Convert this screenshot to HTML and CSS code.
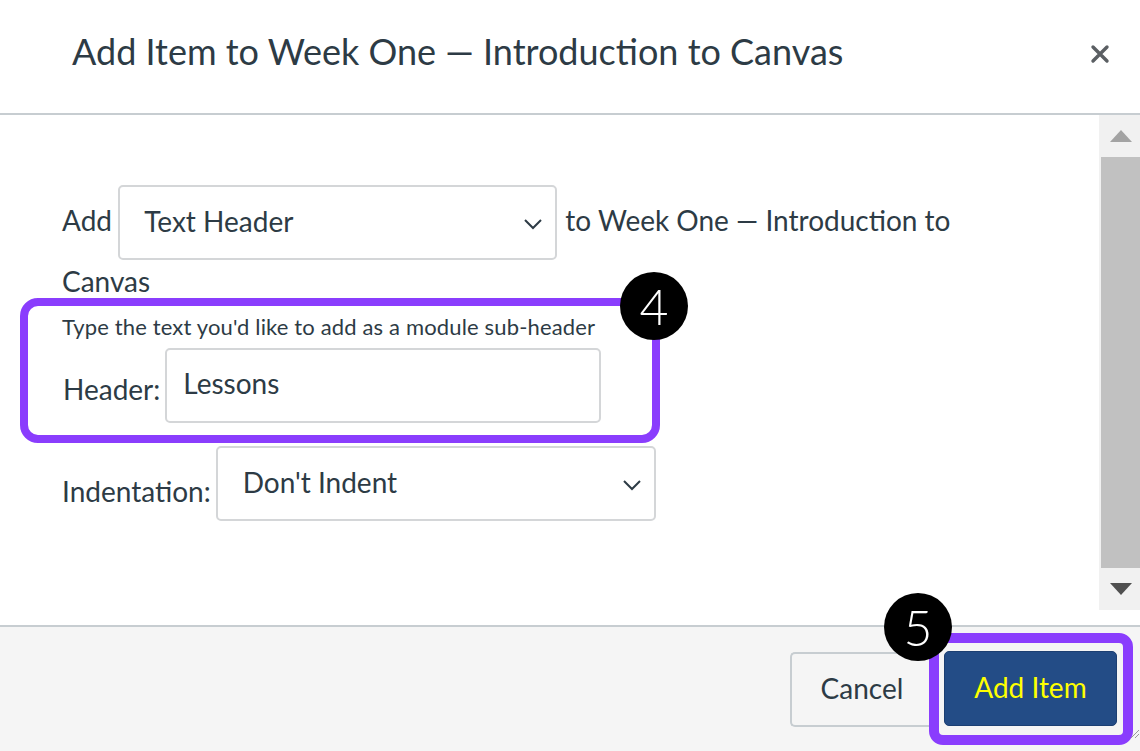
FILE: index.html
```html
<!DOCTYPE html>
<html lang="en">
<head>
    <meta charset="UTF-8">
    <meta name="viewport" content="width=device-width, initial-scale=1.0">
    <title>Add Item</title>
    <link rel="stylesheet" href="styles.css">
</head>
<body>
    <div class="dialog">
        <div class="dialog-header">
            <h1>Add Item to Week One — Introduction to Canvas</h1>
            <button class="close-btn" aria-label="Close">
                <svg width="20" height="20" viewBox="0 0 20 20"><path d="M3 3L17 17M17 3L3 17" stroke="#5b5f63" stroke-width="3.4" stroke-linecap="round"/></svg>
            </button>
        </div>

        <div class="dialog-body">
            <div class="content">
                <p class="add-line">Add <span class="fake-select select-type"><span>Text Header</span><svg class="chevron" width="20" height="12" viewBox="0 0 20 12"><path d="M2 2L10 10L18 2" fill="none" stroke="#2d3b45" stroke-width="2"/></svg></span> to Week One — Introduction to Canvas</p>

                <div class="highlight-box">
                    <span class="badge badge-four">4</span>
                    <p class="hint">Type the text you'd like to add as a module sub-header</p>
                    <div class="field-row">
                        <label for="header">Header:</label>
                        <input type="text" id="header" value="Lessons">
                    </div>
                </div>

                <div class="field-row indent-row">
                    <label>Indentation:</label>
                    <span class="fake-select select-indent"><span>Don't Indent</span><svg class="chevron" width="20" height="12" viewBox="0 0 20 12"><path d="M2 2L10 10L18 2" fill="none" stroke="#2d3b45" stroke-width="2"/></svg></span>
                </div>
            </div>

            <div class="scrollbar">
                <div class="scroll-arrow"><svg width="22" height="12" viewBox="0 0 22 12"><path d="M11 0L22 12H0Z" fill="#a3a3a3"/></svg></div>
                <div class="scroll-thumb"></div>
                <div class="scroll-arrow"><svg width="22" height="12" viewBox="0 0 22 12"><path d="M0 0H22L11 12Z" fill="#505050"/></svg></div>
            </div>
        </div>

        <div class="dialog-footer">
            <button class="btn btn-cancel">Cancel</button>
            <div class="btn-ring">
                <span class="badge badge-five">5</span>
                <button class="btn btn-primary">Add Item</button>
            </div>
            <svg class="resize-grip" width="10" height="10" viewBox="0 0 10 10"><path d="M9 1L1 9M9 5L5 9" stroke="#999" stroke-width="1"/></svg>
        </div>
    </div>
</body>
</html>
```

FILE: styles.css
```css
body {
    margin: 0;
    font-family: Lato, "Open Sans", sans-serif;
    color: #2d3b45;
    background-color: #fff;
    overflow: hidden;
}
.dialog {
    width: 1140px;
    height: 751px;
    display: flex;
    flex-direction: column;
    position: relative;
}
.dialog-header {
    height: 113px;
    flex-shrink: 0;
    display: flex;
    align-items: center;
    justify-content: space-between;
    padding: 0 30px 0 72px;
    border-bottom: 2px solid #c7cdd1;
}
.dialog-header h1 {
    margin: 0 0 12px 0;
    font-size: 36px;
    font-weight: normal;
}
.close-btn {
    background: none;
    border: none;
    padding: 0;
    margin-bottom: 2px;
    cursor: pointer;
}
.dialog-body {
    height: 510px;
    display: flex;
}
.content {
    flex: 1;
    padding: 71px 0 0 62px;
    font-size: 28px;
}
.add-line {
    margin: 0;
    width: 940px;
    line-height: 40px;
}
.fake-select {
    display: inline-flex;
    align-items: center;
    justify-content: space-between;
    box-sizing: border-box;
    height: 75px;
    border: 2px solid #d4d6d8;
    border-radius: 5px;
    background-color: #fff;
    vertical-align: middle;
}
.select-type {
    width: 439px;
    padding: 0 12px 0 24px;
    margin: 0 1px 0 -1px;
    position: relative;
    top: -1px;
}
.select-type span {
    margin-top: -3px;
}
.select-indent span {
    margin-top: -4px;
}
.select-indent {
    width: 440px;
    padding: 0 12px 0 25px;
}
.chevron {
    margin-top: 2px;
}
.highlight-box {
    position: relative;
    width: 640px;
    box-sizing: border-box;
    margin: -3px 0 0 -42px;
    padding: 6px 0 12px 34px;
    border: 8px solid #8a3dfd;
    border-radius: 18px;
}
.hint {
    margin: 0 0 6px 0;
    font-size: 22px;
    letter-spacing: 0.15px;
    line-height: 30px;
}
.field-row {
    display: flex;
    align-items: center;
    gap: 5px;
}
.field-row label {
    padding-top: 6px;
    padding-left: 1px;
}
.field-row input {
    width: 436px;
    height: 75px;
    box-sizing: border-box;
    padding: 0 16px 6px 16px;
    border: 2px solid #d4d6d8;
    border-radius: 5px;
    font-family: inherit;
    font-size: 28px;
    color: #2d3b45;
}
.indent-row {
    margin-top: 3px;
    gap: 5px;
}
.indent-row label {
    padding-left: 0;
    padding-top: 14px;
}
.scrollbar {
    width: 41px;
    height: 495px;
    background-color: #f1f1f1;
    display: flex;
    flex-direction: column;
}
.scroll-arrow {
    height: 42px;
    display: flex;
    align-items: center;
    justify-content: center;
    padding-left: 2px;
}
.scroll-thumb {
    flex: 1;
    margin-left: 2px;
    background-color: #c1c1c1;
}
.dialog-footer {
    flex: 1;
    display: flex;
    justify-content: flex-end;
    align-items: flex-start;
    padding: 6px 7px 0 0;
    border-top: 2px solid #c7cdd1;
    background-color: #f5f5f5;
    position: relative;
}
.btn {
    font-family: inherit;
    font-size: 28px;
    height: 75px;
    border-radius: 5px;
    cursor: pointer;
}
.btn-cancel {
    width: 139px;
    margin-top: 19px;
    border: 2px solid #c7cdd1;
    border-right: none;
    border-radius: 5px 0 0 5px;
    background-color: #f5f5f5;
    color: #2d3b45;
    padding: 0 0 4px 3px;
}
.btn-ring {
    position: relative;
    padding: 8px 6px 9px 5px;
    border: 10px solid #8a3dfd;
    border-radius: 14px;
}
.btn-primary {
    width: 173px;
    padding-bottom: 4px;
    border: 1px solid #1c3f72;
    background-color: #234c86;
    color: #ffff00;
}
.badge {
    position: absolute;
    width: 68px;
    height: 68px;
    border-radius: 50%;
    background-color: #000;
    color: #fff;
    font-size: 50px;
    font-weight: 300;
    line-height: 68px;
    text-align: center;
    z-index: 2;
}
.badge-four {
    left: 592px;
    top: -34px;
}
.badge-five {
    left: -55px;
    top: -50px;
}
.resize-grip {
    position: absolute;
    right: 0;
    bottom: 12px;
}
```
